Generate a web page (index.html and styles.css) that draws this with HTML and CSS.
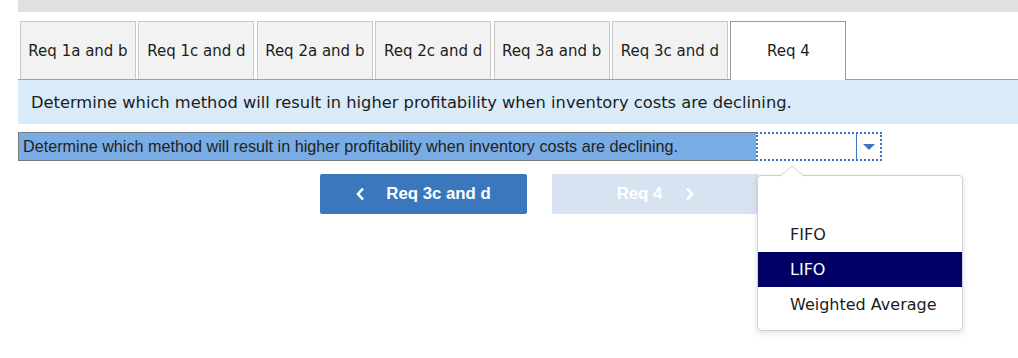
FILE: index.html
```html
<!DOCTYPE html>
<html>
<head>
<meta charset="utf-8">
<link rel="stylesheet" href="styles.css">
</head>
<body>
<div class="page">
  <div class="topbar"></div>
  <div class="tabs">
    <div class="tab">Req 1a and b</div>
    <div class="tab">Req 1c and d</div>
    <div class="tab">Req 2a and b</div>
    <div class="tab">Req 2c and d</div>
    <div class="tab">Req 3a and b</div>
    <div class="tab">Req 3c and d</div>
    <div class="tab active">Req 4</div>
  </div>
  <div class="prompt">Determine which method will result in higher profitability when inventory costs are declining.</div>
  <div class="answer-row">
    <div class="answer-label">Determine which method will result in higher profitability when inventory costs are declining.</div>
    <div class="select">
      <div class="select-value"></div>
      <div class="select-arrow"><span class="tri"></span></div>
    </div>
  </div>
  <div class="nav">
    <div class="btn prev"><span class="chev">
      <svg width="9" height="14" viewBox="0 0 9 14"><path d="M7 1.5 L2 7 L7 12.5" fill="none" stroke="#fff" stroke-width="2.6"/></svg>
    </span>Req 3c and d</div>
    <div class="btn next">Req 4<span class="chev">
      <svg width="9" height="14" viewBox="0 0 9 14"><path d="M2 1.5 L7 7 L2 12.5" fill="none" stroke="#fff" stroke-width="2.6"/></svg>
    </span></div>
  </div>
  <div class="menu">
    <svg class="pointer" width="24" height="12" viewBox="0 0 24 12"><path d="M0 11.5 L12 0.8 L24 11.5" fill="#fff" stroke="#cfcfcf" stroke-width="1"/></svg>
    <div class="opt"></div>
    <div class="opt">FIFO</div>
    <div class="opt sel">LIFO</div>
    <div class="opt">Weighted Average</div>
  </div>
</div>
</body>
</html>
```

FILE: styles.css
```css
* { box-sizing: border-box; }
html, body { margin: 0; padding: 0; background: #fff; }
body { width: 1018px; height: 358px; overflow: hidden; font-family: "DejaVu Sans", Verdana, sans-serif; color: #1c1c1c; }
.page { position: relative; padding-left: 18px; height: 358px; }
.topbar { height: 12px; background: #e0e0e0; }
.tabs {
  display: flex;
  gap: 2.4px;
  margin-top: 9px;
  padding-left: 2px;
  height: 59px;
  border-bottom: 1px solid #a0a0a0;
}
.tab {
  width: 116px;
  height: 58px;
  background: #f2f2f2;
  border: 1px solid #c8c8c8;
  border-bottom: none;
  display: flex;
  align-items: center;
  justify-content: center;
  font-size: 15px;
  white-space: nowrap;
  color: #1c1c1c;
}
.tab.active {
  background: #fff;
  border-color: #9a9a9a;
  height: 59px;
  position: relative;
  z-index: 1;
}
.prompt {
  height: 44px;
  background: #d9ebf9;
  padding-left: 13px;
  display: flex;
  align-items: center;
  font-size: 16.3px;
  color: #1c1c1c;
}
.answer-row {
  display: flex;
  margin-top: 8px;
  height: 29px;
}
.answer-label {
  width: 738px;
  height: 29px;
  background: #79ace4;
  border: 1px solid #7a7a7a;
  border-right: none;
  font-family: "Liberation Sans", Arial, sans-serif;
  font-size: 16.2px;
  padding-left: 4px;
  display: flex;
  align-items: center;
  color: #222;
  white-space: nowrap;
}
.select {
  width: 126px;
  height: 29px;
  border: 2px dotted #3a77bc;
  background: #fff;
  display: flex;
}
.select-value { flex: 1; }
.select-arrow {
  width: 24px;
  border-left: 1px solid #3a77bc;
  display: flex;
  align-items: center;
  justify-content: center;
}
.tri {
  width: 0; height: 0;
  border-left: 6px solid transparent;
  border-right: 6px solid transparent;
  border-top: 6px solid #3a77bc;
}
.nav {
  display: flex;
  gap: 25px;
  margin-top: 13px;
  padding-left: 302px;
}
.btn {
  width: 207px;
  height: 40px;
  border-radius: 2px;
  display: flex;
  align-items: center;
  justify-content: center;
  font-family: "Liberation Sans", Arial, sans-serif;
  font-weight: bold;
  font-size: 16.8px;
  color: #fff;
}
.btn.prev { background: #3a77bc; }
.btn.next { background: #d7e3f1; }
.btn.prev .chev { margin-right: 21px; display: flex; }
.btn.next .chev { margin-left: 23px; display: flex; }
.menu {
  position: absolute;
  left: 757px;
  top: 175px;
  width: 206px;
  height: 156px;
  background: #fff;
  border: 1px solid #cfcfcf;
  border-radius: 4px;
  box-shadow: 0 2px 6px rgba(0,0,0,0.12);
  padding: 6px 0 8px;
  z-index: 5;
}
.pointer {
  position: absolute;
  left: 22px;
  top: -11px;
}
.opt {
  height: 35px;
  padding-left: 32px;
  display: flex;
  align-items: center;
  font-size: 16px;
  color: #1c1c1c;
}
.opt.sel { background: #000066; color: #fff; }
```
